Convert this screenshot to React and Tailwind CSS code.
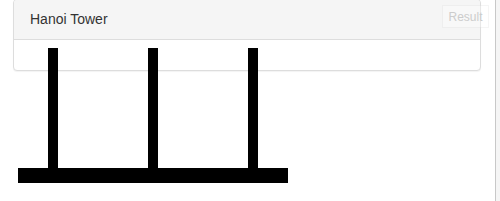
import React from "react";

export default function App() {
  return (
    <div
      className="relative flex w-[500px] h-[201px] overflow-hidden bg-white"
      style={{ fontFamily: '"Liberation Sans", Arial, sans-serif' }}
    >
      {/* Main area */}
      <div className="flex-1">
        <div className="ml-[13px] -mt-px w-[468px] rounded-[4px] border border-[#ddd] bg-white shadow-[0_1px_1px_rgba(0,0,0,0.05)]">
          <div className="flex h-[40px] items-center rounded-t-[3px] border-b border-[#ddd] bg-[#f5f5f5] pl-[16px] pb-[2px]">
            <span className="text-[14px] leading-[20px] text-[#333]">Hanoi Tower</span>
          </div>
          <div className="h-[30px]" />
        </div>
      </div>

      {/* Right gutter */}
      <div className="w-[5px] border-l border-[#c8c8c8] bg-[#f5f5f5]" />

      {/* Result badge */}
      <div className="absolute left-[442px] top-[5px] flex h-[23px] w-[47px] items-center justify-center border border-black/[0.04] bg-white/30 text-[12px] text-[#cccccc]">
        Result
      </div>

      {/* Tower drawing */}
      <svg className="absolute left-0 top-0" width="500" height="201" viewBox="0 0 500 201">
        <rect x="48" y="48" width="10" height="120" fill="#000" />
        <rect x="148" y="48" width="10" height="120" fill="#000" />
        <rect x="248" y="48" width="10" height="120" fill="#000" />
        <rect x="18" y="168" width="270" height="15" fill="#000" />
      </svg>
    </div>
  );
}
